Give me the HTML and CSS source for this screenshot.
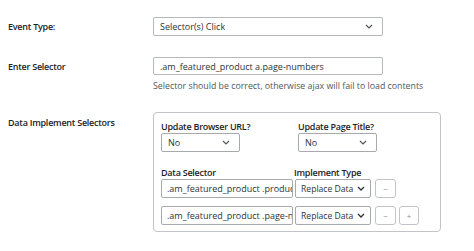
FILE: index.html
```html
<!DOCTYPE html>
<html lang="en">

<head>
    <meta charset="UTF-8" />
    <meta name="viewport" content="width=device-width, initial-scale=1.0" />
    <title>Ajax settings</title>
    <link rel="stylesheet" href="styles.css">
</head>

<body>
    <div class="form">
        <div class="row row-event">
            <div class="label label-middle">Event Type:</div>
            <div class="field">
                <div class="select select-wide">
                    <span>Selector(s) Click</span>
                    <svg class="chev" width="8" height="5" viewBox="0 0 8 5"><path d="M1 1l3 3 3-3" fill="none" stroke="#50575e" stroke-width="1.2"/></svg>
                </div>
            </div>
        </div>

        <div class="row row-selector">
            <div class="label label-input">Enter Selector</div>
            <div class="field">
                <div class="input input-wide">.am_featured_product a.page-numbers</div>
                <p class="help">Selector should be correct, otherwise ajax will fail to load contents</p>
            </div>
        </div>

        <div class="row row-data">
            <div class="label label-top">Data Implement Selectors</div>
            <div class="field">
                <div class="box">
                    <div class="toggles">
                        <div class="toggle">
                            <div class="sub-label">Update Browser URL?</div>
                            <div class="select select-small">
                                <span>No</span>
                                <svg class="chev" width="8" height="5" viewBox="0 0 8 5"><path d="M1 1l3 3 3-3" fill="none" stroke="#50575e" stroke-width="1.2"/></svg>
                            </div>
                        </div>
                        <div class="toggle">
                            <div class="sub-label">Update Page Title?</div>
                            <div class="select select-small">
                                <span>No</span>
                                <svg class="chev" width="8" height="5" viewBox="0 0 8 5"><path d="M1 1l3 3 3-3" fill="none" stroke="#50575e" stroke-width="1.2"/></svg>
                            </div>
                        </div>
                    </div>

                    <div class="heads">
                        <div class="sub-label head-selector">Data Selector</div>
                        <div class="sub-label">Implement Type</div>
                    </div>

                    <div class="pair">
                        <div class="input input-data"><span>.am_featured_product .product</span></div>
                        <div class="select select-type">
                            <span>Replace Data</span>
                            <svg class="chev" width="8" height="5" viewBox="0 0 8 5"><path d="M1 1l3 3 3-3" fill="none" stroke="#2c3338" stroke-width="1.3"/></svg>
                        </div>
                        <button class="small-btn">&minus;</button>
                    </div>
                    <div class="pair">
                        <div class="input input-data"><span>.am_featured_product .page-numbers</span></div>
                        <div class="select select-type">
                            <span>Replace Data</span>
                            <svg class="chev" width="8" height="5" viewBox="0 0 8 5"><path d="M1 1l3 3 3-3" fill="none" stroke="#2c3338" stroke-width="1.3"/></svg>
                        </div>
                        <button class="small-btn">&minus;</button>
                        <button class="small-btn btn-plus">+</button>
                    </div>
                </div>
            </div>
        </div>
    </div>
</body>

</html>
```

FILE: styles.css
```css
:root {
    --text-color: #1d2327;
    --field-text: #2c3338;
    --muted: #50575e;
    --border: #c3c4c7;
    --field-border: #a7aaad;
}

body {
    margin: 0;
    padding: 0;
    font-family: 'Open Sans', 'Noto Sans', sans-serif;
    font-size: 9px;
    color: var(--text-color);
    background: #fff;
}

.form {
    padding: 17px 0 0 8px;
}

.row {
    display: grid;
    grid-template-columns: 145px 1fr;
}

.row-selector {
    margin-top: 21px;
}

.row-data {
    margin-top: 20px;
}

.label,
.sub-label {
    font-weight: 600;
    letter-spacing: -0.25px;
    line-height: 12px;
}

.label-middle {
    align-self: start;
    padding-top: 4px;
}

.label-input {
    padding-top: 4px;
}

.label-top {
    padding-top: 5px;
}

.select,
.input {
    box-sizing: border-box;
    border: 1px solid var(--field-border);
    border-radius: 2px;
    background: #fff;
    color: var(--field-text);
    display: flex;
    align-items: center;
    white-space: nowrap;
    overflow: hidden;
}

.select span,
.input span {
    overflow: hidden;
    min-width: 0;
}

.select {
    justify-content: space-between;
    gap: 2px;
    padding: 0 8px 0 7px;
}

.select-wide {
    width: 230px;
    height: 19px;
    padding-left: 6px;
    padding-right: 9px;
    border-color: #b5b8bb;
}

.input-wide {
    width: 230px;
    height: 18px;
    padding-left: 6px;
    border-color: #b5b8bb;
}

.help {
    margin: 5px 0 0;
    line-height: 12px;
    font-size: 8.8px;
    color: var(--muted);
}

.box {
    box-sizing: border-box;
    width: 288px;
    height: 120px;
    border: 1px solid var(--border);
    border-radius: 4px;
    padding: 8px 0 0 7px;
}

.toggles {
    display: flex;
}

.toggle {
    width: 137px;
}

.select-small {
    width: 79px;
    height: 19px;
    padding-left: 6px;
    padding-right: 9px;
}

.heads {
    display: flex;
    margin-top: 15px;
}

.head-selector {
    width: 133px;
}

.pair {
    display: flex;
    align-items: center;
    gap: 2px;
    margin-bottom: 8px;
}

.input-data {
    width: 132px;
    height: 19px;
    padding-left: 5px;
}

.select-type {
    width: 76px;
    height: 19px;
    padding-left: 5px;
    padding-right: 5px;
    font-size: 8.6px;
}

.chev {
    flex-shrink: 0;
}

.small-btn {
    box-sizing: border-box;
    width: 21px;
    height: 19px;
    margin-left: 2px;
    padding: 0;
    border: 1px solid var(--border);
    border-radius: 3px;
    background: #fff;
    color: #8c8f94;
    font-family: inherit;
    font-size: 8px;
    line-height: 1;
}

.btn-plus {
    width: 20px;
    margin-left: 1px;
}
```
